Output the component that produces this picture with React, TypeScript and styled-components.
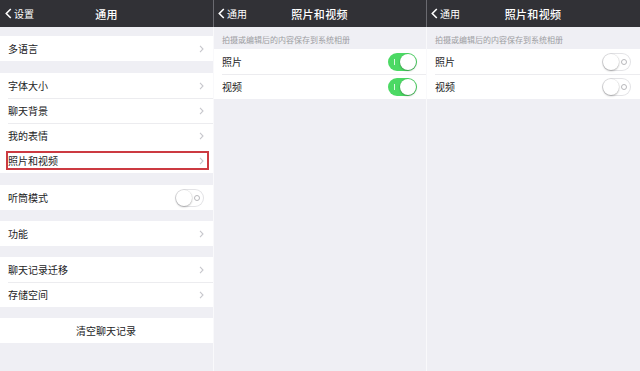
import React from "react";
import styled, { createGlobalStyle } from "styled-components";

const Global = createGlobalStyle`
  html, body { margin: 0; padding: 0; background: #efeff4; }
  body { font-family: "Noto Sans CJK SC", "Noto Sans", sans-serif; -webkit-font-smoothing: antialiased; }
  * { box-sizing: border-box; }
`;

const Screen = styled.div`
  display: flex;
  width: 640px;
  height: 371px;
  overflow: hidden;
  background: #efeff4;
`;

const Panel = styled.div<{ $width: number }>`
  display: flex;
  flex-direction: column;
  width: ${(p) => p.$width}px;
  flex: none;
  height: 100%;
`;

const Header = styled.div<{ $divided?: boolean }>`
  position: relative;
  height: 27px;
  flex: none;
  background: #313136;
  display: grid;
  grid-template-columns: 1fr auto 1fr;
  align-items: center;
  box-shadow: ${(p) => (p.$divided ? "inset 1px 0 0 #6a6a70" : "none")};
  color: #fff;
`;

const Back = styled.div`
  display: flex;
  align-items: center;
  gap: 2px;
  padding-left: 5px;
  font-size: 10px;
  color: #ffffff;
  justify-self: start;
`;

const Title = styled.div`
  font-size: 11px;
  font-weight: 500;
  letter-spacing: 0.3px;
  color: #ffffff;
`;

const Body = styled.div<{ $divided?: boolean }>`
  flex: 1;
  display: flex;
  flex-direction: column;
  border-left: ${(p) => (p.$divided ? "1px solid #f9f9fb" : "none")};
`;

const Group = styled.div<{ $gap: number }>`
  margin-top: ${(p) => p.$gap}px;
  background: #ffffff;
  display: flex;
  flex-direction: column;
`;

const Row = styled.div<{ $highlight?: boolean; $center?: boolean }>`
  position: relative;
  height: 25px;
  display: flex;
  align-items: center;
  justify-content: ${(p) => (p.$center ? "center" : "space-between")};
  padding: 0 9px 0 8px;
  font-size: 10px;
  color: #1c1c1e;

  & + &::before {
    content: "";
    position: absolute;
    top: 0;
    left: 8px;
    right: 0;
    height: 1px;
    background: #ececef;
  }

  ${(p) =>
    p.$highlight
      ? `&::after {
    content: "";
    position: absolute;
    top: 3px;
    left: 6px;
    right: 4px;
    bottom: 3px;
    border: 2px solid #cc3a41;
    pointer-events: none;
  }`
      : ""}
`;

const Caption = styled.div`
  height: 22px;
  display: flex;
  align-items: flex-end;
  padding: 0 0 4px 8px;
  font-size: 8px;
  color: #9d9da2;
`;

const ToggleTrack = styled.div<{ $on: boolean }>`
  position: relative;
  width: 29px;
  height: 18px;
  border-radius: 9px;
  flex: none;
  background: ${(p) => (p.$on ? "#4cd964" : "#ffffff")};
  box-shadow: ${(p) => (p.$on ? "none" : "inset 0 0 0 1px #e3e3e6")};
`;

const Knob = styled.div<{ $on: boolean }>`
  position: absolute;
  top: 1px;
  left: ${(p) => (p.$on ? "12px" : "1px")};
  width: 16px;
  height: 16px;
  border-radius: 50%;
  background: #ffffff;
  box-shadow: 0 1px 2px rgba(0, 0, 0, 0.28), 0 0 0 0.5px rgba(0, 0, 0, 0.08);
`;

const OnMark = styled.div`
  position: absolute;
  left: 6px;
  top: 6px;
  width: 1px;
  height: 6px;
  background: rgba(255, 255, 255, 0.8);
`;

const OffMark = styled.div`
  position: absolute;
  right: 4px;
  top: 6px;
  width: 6px;
  height: 6px;
  border-radius: 50%;
  border: 1px solid #b8b8bc;
`;

const Toggle = ({ on }: { on: boolean }) => (
  <ToggleTrack $on={on}>
    {on ? <OnMark /> : <OffMark />}
    <Knob $on={on} />
  </ToggleTrack>
);

const Chevron = () => (
  <svg width="5" height="8" viewBox="0 0 5 8" style={{ flex: "none" }}>
    <polyline points="1,0.8 4,4 1,7.2" fill="none" stroke="#c7c7cc" strokeWidth="1.1" />
  </svg>
);

const BackChevron = () => (
  <svg width="7" height="11" viewBox="0 0 7 11">
    <polyline points="5.8,1 1.3,5.5 5.8,10" fill="none" stroke="#ffffff" strokeWidth="1.6" />
  </svg>
);

const NavBar = ({ back, title, divided }: { back: string; title: string; divided?: boolean }) => (
  <Header $divided={divided}>
    <Back>
      <BackChevron />
      <span>{back}</span>
    </Back>
    <Title>{title}</Title>
    <span />
  </Header>
);

type Item = { label: string; kind?: "chevron" | "toggle" | "center"; highlight?: boolean };

const leftGroups: { gap: number; items: Item[] }[] = [
  { gap: 9, items: [{ label: "多语言" }] },
  {
    gap: 12,
    items: [
      { label: "字体大小" },
      { label: "聊天背景" },
      { label: "我的表情" },
      { label: "照片和视频", highlight: true },
    ],
  },
  { gap: 12, items: [{ label: "听筒模式", kind: "toggle" }] },
  { gap: 11, items: [{ label: "功能" }] },
  { gap: 11, items: [{ label: "聊天记录迁移" }, { label: "存储空间" }] },
  { gap: 11, items: [{ label: "清空聊天记录", kind: "center" }] },
];

const PhotoPanel = ({ on, width }: { on: boolean; width: number }) => (
  <Panel $width={width}>
    <NavBar back="通用" title="照片和视频" divided />
    <Body $divided>
      <Caption>拍摄或编辑后的内容保存到系统相册</Caption>
      <Group $gap={0}>
        <Row>
          <span>照片</span>
          <Toggle on={on} />
        </Row>
        <Row>
          <span>视频</span>
          <Toggle on={on} />
        </Row>
      </Group>
    </Body>
  </Panel>
);

export default function App() {
  return (
    <>
      <Global />
      <Screen>
        <Panel $width={213}>
          <NavBar back="设置" title="通用" />
          <Body>
            {leftGroups.map((g, gi) => (
              <Group key={gi} $gap={g.gap}>
                {g.items.map((it) => (
                  <Row key={it.label} $highlight={it.highlight} $center={it.kind === "center"}>
                    <span>{it.label}</span>
                    {it.kind === "toggle" ? <Toggle on={false} /> : it.kind === "center" ? null : <Chevron />}
                  </Row>
                ))}
              </Group>
            ))}
          </Body>
        </Panel>
        <PhotoPanel on width={213} />
        <PhotoPanel on={false} width={214} />
      </Screen>
    </>
  );
}
